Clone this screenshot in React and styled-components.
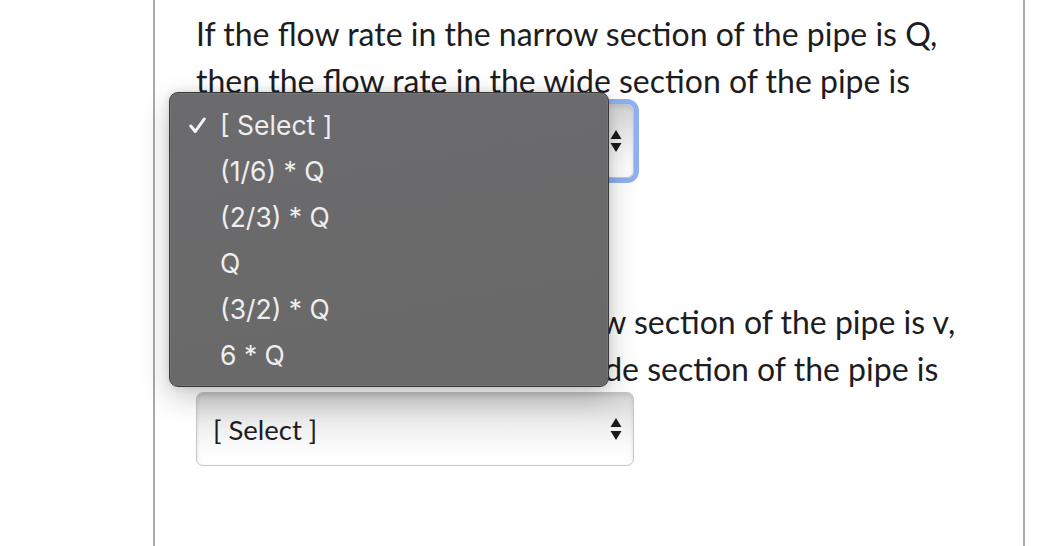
import React from "react";
import styled, { createGlobalStyle } from "styled-components";

const Global = createGlobalStyle`
  html, body { margin: 0; padding: 0; background: #fff; }
  body { font-family: Lato, "Open Sans", sans-serif; color: #1d1d1f; }
`;

const Page = styled.div`
  position: relative;
  width: 1053px;
  height: 546px;
  overflow: hidden;
`;

const Panel = styled.div`
  margin-left: 153px;
  width: 872px;
  height: 546px;
  border-left: 2px solid #aaaaaa;
  border-right: 2px solid #aaaaaa;
  padding: 10px 0 0 41px;
  box-sizing: border-box;
`;

const Para = styled.p`
  margin: 0;
  font-size: 32px;
  line-height: 47px;
  white-space: nowrap;
`;

const Gap = styled.div`
  height: ${(p) => p.$h}px;
`;

const SelectBox = styled.div`
  position: relative;
  width: 438px;
  height: 74px;
  box-sizing: border-box;
  border: 1px solid #c6c6c6;
  border-radius: 7px;
  background: linear-gradient(#d4d4d4 0%, #ececec 40%, #fbfbfb 75%, #ffffff 100%);
  box-shadow: inset 0 2px 4px rgba(0, 0, 0, 0.1), inset 0 -1px 0 rgba(255,255,255,0.8);
  display: flex;
  align-items: center;
  padding: 0 11px 0 16px;
  outline: ${(p) => (p.$focused ? "5px solid #8fb0f2" : "none")};
  outline-offset: 0px;
`;

const SelectText = styled.span`
  flex: 1;
  font-size: 27.5px;
  color: #1d1d1f;
`;

const Arrows = styled.svg`
  width: 12px;
  height: 24px;
  display: block;
`;

const Menu = styled.div`
  position: absolute;
  left: 169px;
  top: 92px;
  width: 440px;
  height: 295px;
  box-sizing: border-box;
  border: 1px solid #38383a;
  border-radius: 9px;
  background: linear-gradient(170deg, #6b6b6e 0%, #6a6a6b 60%, #686868 100%);
  box-shadow: 0 0 0 0.5px rgba(255,255,255,0.15) inset, 0 10px 30px rgba(0,0,0,0.22), 0 0 8px rgba(0,0,0,0.12);
  padding-top: 9px;
  display: flex;
  flex-direction: column;
`;

const Item = styled.div`
  height: 46px;
  display: flex;
  align-items: center;
  font-family: Inter, "Liberation Sans", sans-serif;
  font-size: 26.5px;
  color: #eeeeee;
  padding-left: 19px;
`;

const Check = styled.span`
  width: 31px;
  display: inline-flex;
  align-items: center;
`;

const ArrowIcon = () => (
  <Arrows viewBox="0 0 12 24">
    <path d="M6 1 L11.5 10 L0.5 10 Z" fill="#1a1a1a" />
    <path d="M0.5 14 L11.5 14 L6 23 Z" fill="#1a1a1a" />
  </Arrows>
);

const options = ["[ Select ]", "(1/6) * Q", "(2/3) * Q", "Q", "(3/2) * Q", "6 * Q"];

export default function App() {
  return (
    <Page>
      <Global />
      <Panel>
        <Para>
          If the flow rate in the narrow section of the pipe is Q,
          <br />
          then the flow rate in the wide section of the pipe is
        </Para>
        <SelectBox $focused>
          <SelectText>[ Select ]</SelectText>
          <ArrowIcon />
        </SelectBox>
        <Gap $h={120} />
        <Para>
          If the flow speed in the narrow section of the pipe is v,
          <br />
          then the flow speed in the wide section of the pipe is
        </Para>
        <SelectBox>
          <SelectText>[ Select ]</SelectText>
          <ArrowIcon />
        </SelectBox>
      </Panel>
      <Menu>
        {options.map((o, i) => (
          <Item key={o}>
            <Check>
              {i === 0 && (
                <svg width="17" height="17" viewBox="0 0 17 17">
                  <path d="M1.8 9 L6.3 14.5 L15.2 2" fill="none" stroke="#f4f4f4" strokeWidth="3" strokeLinecap="round" strokeLinejoin="round" />
                </svg>
              )}
            </Check>
            {o}
          </Item>
        ))}
      </Menu>
    </Page>
  );
}
